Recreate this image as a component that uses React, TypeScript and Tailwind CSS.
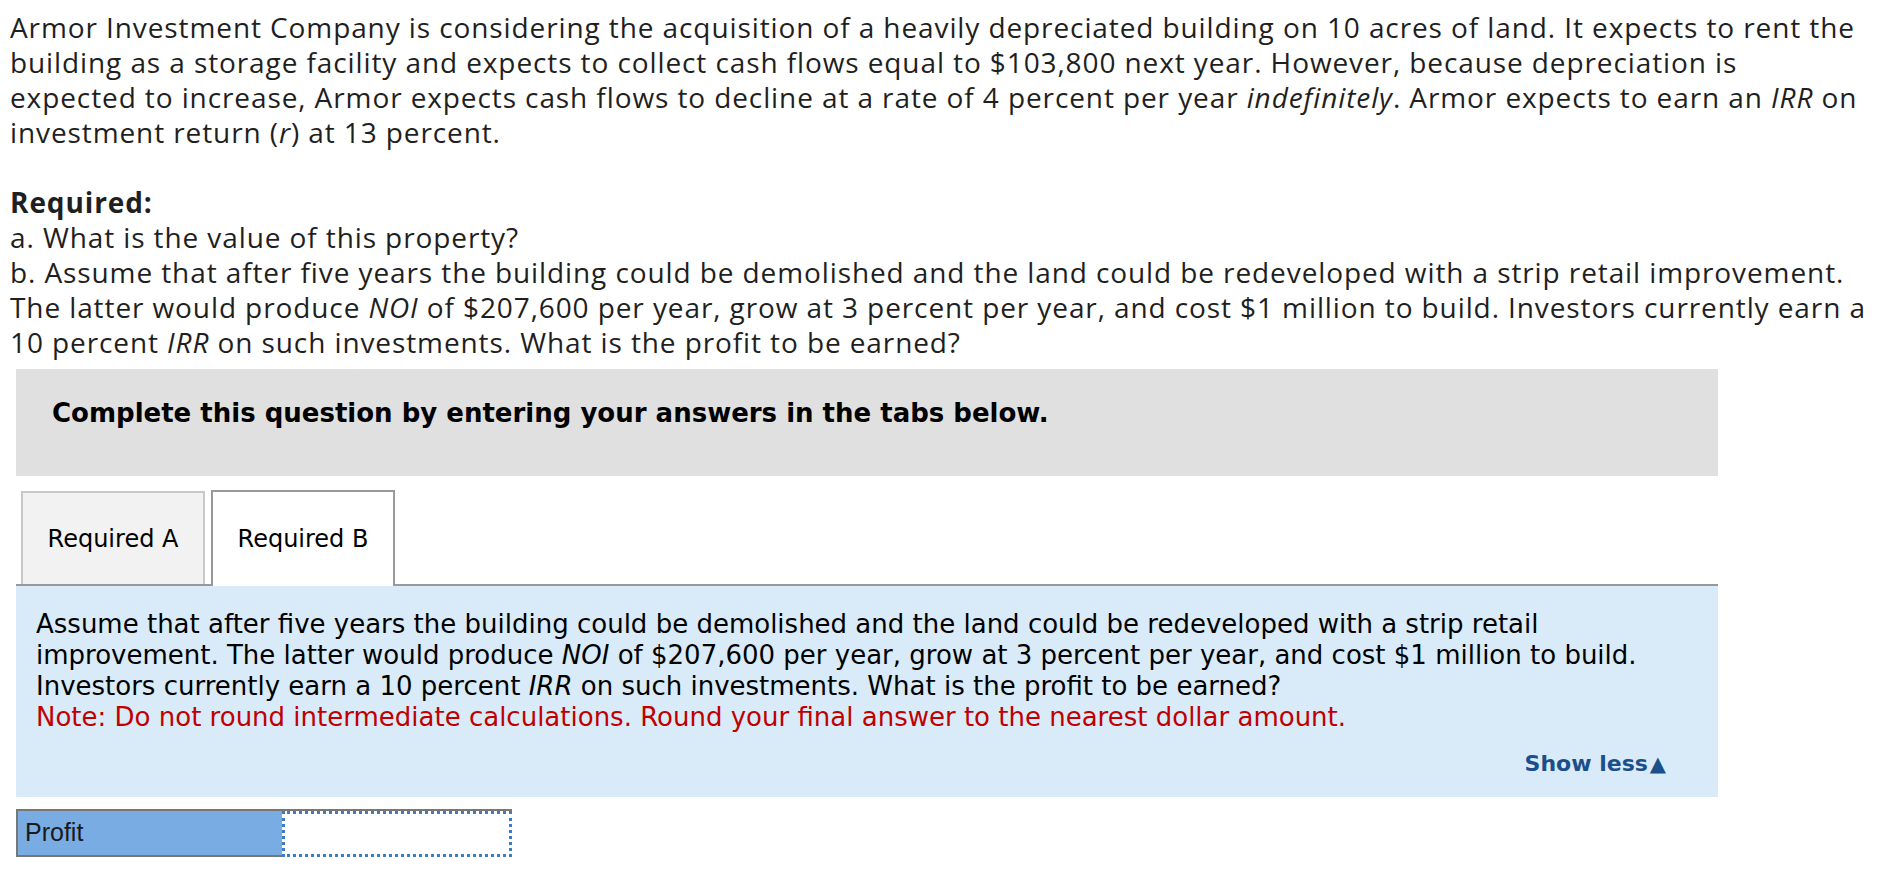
export default function App() {
  const sans = { fontFamily: "'Open Sans', Lato, sans-serif" }
  const verdana = { fontFamily: "'DejaVu Sans', Verdana, sans-serif" }

  return (
    <div className="min-h-[872px] w-[1902px] bg-white text-[#1f1f1f]">
      <div className="pl-[10px] pt-[10px] text-[28px] leading-[35px] tracking-[0.9px] whitespace-nowrap" style={sans}>
        <p>
          <span className="block">
            Armor Investment Company is considering the acquisition of a heavily depreciated building on 10 acres of land. It expects to rent the
          </span>
          <span className="block">
            building as a storage facility and expects to collect cash flows equal to $103,800 next year. However, because depreciation is
          </span>
          <span className="block">
            expected to increase, Armor expects cash flows to decline at a rate of 4 percent per year <i>indefinitely</i>. Armor expects to earn an <i>IRR</i> on
          </span>
          <span className="block">
            investment return (<i>r</i>) at 13 percent.
          </span>
        </p>
        <p className="mt-[35px]">
          <span className="block font-bold">Required:</span>
          <span className="block">a. What is the value of this property?</span>
          <span className="block">
            b. Assume that after five years the building could be demolished and the land could be redeveloped with a strip retail improvement.
          </span>
          <span className="block">
            The latter would produce <i>NOI</i> of $207,600 per year, grow at 3 percent per year, and cost $1 million to build. Investors currently earn a
          </span>
          <span className="block">
            10 percent <i>IRR</i> on such investments. What is the profit to be earned?
          </span>
        </p>
      </div>

      <div className="mx-[16px] mt-[9px] w-[1702px]" style={verdana}>
        <div className="h-[107px] bg-[#e0e0e0] pl-[36px] pt-[29px] text-[26px] leading-[30px] font-bold text-black whitespace-nowrap">
          Complete this question by entering your answers in the tabs below.
        </div>

        <div className="mt-[14px] flex items-end gap-[6px] pl-[5px] text-[24px] text-black">
          <div className="flex h-[93px] w-[184px] items-center justify-center border-2 border-b-0 border-[#c8c8c8] bg-[#f2f2f2]">
            Required A
          </div>
          <div className="relative z-10 -mb-[2px] flex h-[96px] w-[184px] items-center justify-center border-2 border-b-0 border-[#999] bg-white">
            Required B
          </div>
        </div>

        <div className="border-t-2 border-[#999] bg-[#d9ebf9] pl-[20px] pr-[52px] pt-[23px] pb-[18px] text-[26px] leading-[31px] text-black whitespace-nowrap">
          <span className="block">
            Assume that after five years the building could be demolished and the land could be redeveloped with a strip retail
          </span>
          <span className="block">
            improvement. The latter would produce <i>NOI</i> of $207,600 per year, grow at 3 percent per year, and cost $1 million to build.
          </span>
          <span className="block">
            Investors currently earn a 10 percent <i>IRR</i> on such investments. What is the profit to be earned?
          </span>
          <span className="block text-[#c00000]">
            Note: Do not round intermediate calculations. Round your final answer to the nearest dollar amount.
          </span>
          <div className="mt-[16px] flex justify-end text-[22px] leading-[30px] font-bold text-[#1b4f8a]">
            <span>Show less</span>
            <span className="ml-[2px] text-[21px]">▲</span>
          </div>
        </div>

        <div className="mt-[12px] flex h-[48px]">
          <div
            className="flex w-[266px] items-center border-2 border-r-0 border-[#777] bg-[#78ace2] pl-[7px] text-[25px] text-[#1a1a1a]"
            style={{ fontFamily: "'Liberation Sans', Arial, sans-serif" }}
          >
            Profit
          </div>
          <div className="flex w-[230px] flex-col border-t-2 border-[#777] bg-white">
            <div className="flex-1 border-[3px] border-dotted border-[#3b7cc4]" />
          </div>
        </div>
      </div>
    </div>
  )
}
